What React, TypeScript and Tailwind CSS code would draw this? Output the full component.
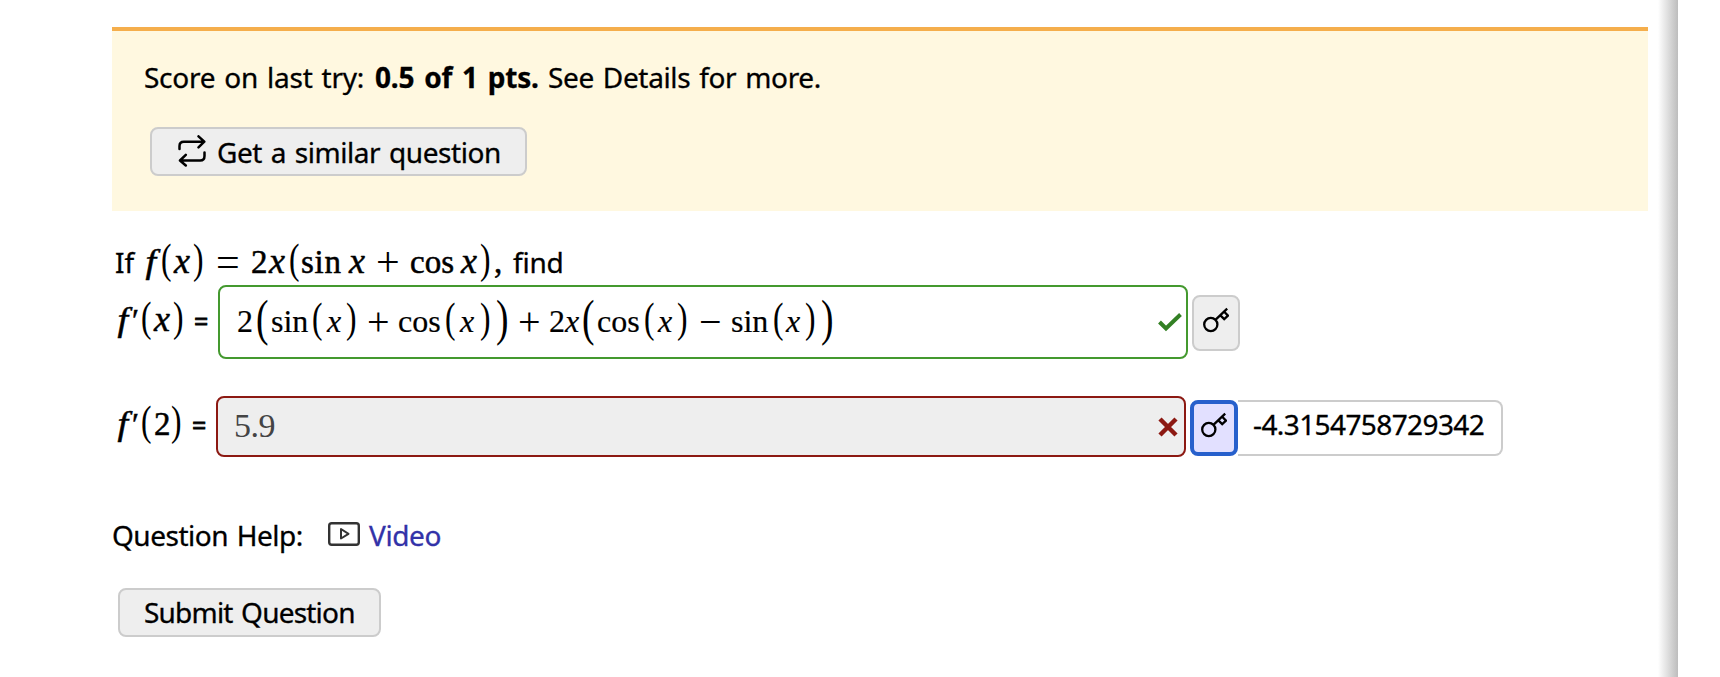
import type { ReactNode } from 'react'
import clsx from 'clsx'

/** One math symbol: fixed advance, so the spacing stays the same whatever the font. */
function G({ className, children }: { className?: string; children: ReactNode }) {
  return <span className={clsx('inline-block shrink-0 whitespace-nowrap', className)}>{children}</span>
}

function Paren({ className, big, children }: { className?: string; big?: boolean; children: ReactNode }) {
  return (
    <G className={className}>
      <span
        className={clsx(
          'inline-block origin-left scale-x-75 -ml-px [-webkit-text-stroke:0]',
          big ? 'relative top-[3px] text-[50px]' : 'text-[42px]',
        )}
      >
        {children}
      </span>
    </G>
  )
}

/** Binary operator or relation, lowered onto the math axis. */
function Op({ className, children }: { className?: string; children: ReactNode }) {
  return (
    <G className={className}>
      <span className="relative top-[3px] [-webkit-text-stroke:0]">{children}</span>
    </G>
  )
}

/** Slanted f, drawn wider than the serif italic one. */
function F({ className }: { className?: string }) {
  return (
    <G className={className}>
      <span className="inline-block origin-left scale-x-115 pl-1 text-[33px] italic">f</span>
    </G>
  )
}

function KeyIcon() {
  return (
    <svg viewBox="0 0 26 26" className="h-[26px] w-[26px]" fill="none" stroke="currentColor" strokeWidth="2.3">
      <circle cx="7.800" cy="17.500" r="6.600" />
      <path d="M12.400 12.900 24.200 1.600M17.400 8.400l3.800 3.700 3.800-3.500-3.800-3.900" />
    </svg>
  )
}

function RepeatIcon() {
  return (
    <svg
      viewBox="0 0 28 32"
      className="-mt-0.5 h-8 w-7"
      fill="none"
      stroke="currentColor"
      strokeWidth="2.5"
      strokeLinecap="round"
      strokeLinejoin="round"
    >
      <path d="M1.500 14v-3c0-3 1.500-4.300 4.300-4.300h20M20.500 1.300l5.800 5.400-5.800 5.600" />
      <path d="M26.500 17.500v3.500c0 3-1.500 4.500-4.300 4.500h-20M7.800 19.800 2 25.500l5.800 5" />
    </svg>
  )
}

function VideoIcon() {
  return (
    <svg viewBox="0 0 32 24" className="-mt-0.5 h-6 w-8" fill="none" stroke="#333" strokeWidth="2.4" strokeLinejoin="round">
      <rect x="1.200" y="1.200" width="29.600" height="21.600" rx="2.500" />
      <path d="M13 7v9.500l7.500-4.700z" strokeWidth="2" />
    </svg>
  )
}

const button = 'flex items-center rounded-lg border-2 border-[#ccc] bg-[#eee]'
const math = "flex items-baseline font-['Liberation_Serif',serif] leading-[50px]"
const heavy = '[-webkit-text-stroke:0.5px]'

export default function App() {
  return (
    <div className="flex h-[677px] w-[1720px] overflow-hidden bg-white font-['Noto_Sans',sans-serif] text-[28px] leading-[36px] text-black [-webkit-text-stroke:0.3px]">
      <main className="w-[1658px] pl-[112px] pt-[27px]">
        <section className="h-[184px] w-[1536px] border-t-4 border-[#f5ae4c] bg-[#fff8e0] pl-8 pt-7">
          <p className="flex whitespace-pre">
            <span className="w-[231px] tracking-[-0.25px] [word-spacing:2px]">Score on last try: </span>
            <b className="w-[173px] tracking-[-0.25px] [word-spacing:3px]">0.5 of 1 pts.</b>
            <span className="tracking-[-0.35px] [word-spacing:2px]">See Details for more.</span>
          </p>
          <button className={clsx(button, 'ml-1.5 mt-8 h-[49px] w-[377px] pl-[26px]')}>
            <RepeatIcon />
            <span className="ml-[11px] whitespace-nowrap tracking-[-0.45px] [word-spacing:2px]">
              Get a similar question
            </span>
          </button>
        </section>

        <div className={clsx(math, heavy, 'mt-[23px] h-[51px] pl-[3px] text-[32px]')}>
          <G className="w-[26px] font-['Noto_Sans'] text-[28px] [-webkit-text-stroke:0.3px]">If</G>
          <F className="w-[21px]" />
          <Paren className="w-[12px]">(</Paren>
          <G className="w-[20px] text-[36px] italic">x</G>
          <Paren className="w-[22px]">)</Paren>
          <Op className="w-[35px] text-[42px]">=</Op>
          <G className="w-[18px] text-[33px]">2</G>
          <G className="w-[21px] text-[36px] italic">x</G>
          <Paren className="w-[11px]">(</Paren>
          <G className="w-[48px] text-[33px] tracking-[0.7px]">sin</G>
          <G className="w-[27px] text-[36px] italic">x</G>
          <Op className="w-[34px] text-[42px]">+</Op>
          <G className="w-[51px] text-[33px]">cos</G>
          <G className="w-[20px] text-[36px] italic">x</G>
          <Paren className="w-[13px]">)</Paren>
          <G className="w-[19px] text-[33px]">,</G>
          <G className="font-['Noto_Sans'] text-[28px] tracking-[-0.2px] [-webkit-text-stroke:0.3px]">find</G>
        </div>

        <div className="flex h-[74px] items-start">
          <div className={clsx(math, heavy, 'w-[106px] pl-px pt-[7px]')}>
            <F className="w-[19px]" />
            <G className="w-[10px] text-[32px]">′</G>
            <Paren className="w-[12px]">(</Paren>
            <G className="w-[20px] text-[36px] italic">x</G>
            <Paren className="w-[20px]">)</Paren>
            <G className="font-['Noto_Sans'] text-[25px] [-webkit-text-stroke:0.8px]">=</G>
          </div>
          <div className="flex h-[74px] w-[970px] justify-between rounded-lg border-2 border-[#44992f] pl-[17px] pr-1">
            <div className={clsx(math, 'pt-[3px] text-[32px] [-webkit-text-stroke:0.2px]')}>
              <G className="w-[20px]">2</G>
              <Paren big className="w-[14px]">(</Paren>
              <G className="w-[42px]">sin</G>
              <Paren className="w-[14px]">(</Paren>
              <G className="w-[20px] italic">x</G>
              <Paren className="w-[20px]">)</Paren>
              <Op className="w-[31px] text-[40px]">+</Op>
              <G className="w-[48px]">cos</G>
              <Paren className="w-[14px]">(</Paren>
              <G className="w-[21px] italic">x</G>
              <Paren className="w-[16px]">)</Paren>
              <Paren big className="w-[21px]">)</Paren>
              <Op className="w-[31px] text-[40px]">+</Op>
              <G className="w-[16px]">2</G>
              <G className="w-[18px] italic">x</G>
              <Paren big className="w-[14px]">(</Paren>
              <G className="w-[48px]">cos</G>
              <Paren className="w-[13px]">(</Paren>
              <G className="w-[20px] italic">x</G>
              <Paren className="w-[21px]">)</Paren>
              <Op className="w-[32px] text-[40px]">−</Op>
              <G className="w-[43px]">sin</G>
              <Paren className="w-[12px]">(</Paren>
              <G className="w-[20px] italic">x</G>
              <Paren className="w-[16px]">)</Paren>
              <Paren big>)</Paren>
            </div>
            <svg viewBox="0 0 24 19" className="mt-[26px] h-[19px] w-6" fill="none" stroke="#338024" strokeWidth="4">
              <path d="M1.500 9l6.500 6.500L22.500 1.500" />
            </svg>
          </div>
          <button className={clsx(button, 'ml-1 mt-2.5 h-14 w-12 items-start pl-[9px] pt-2.5')}>
            <KeyIcon />
          </button>
        </div>

        <div className="mt-[37px] flex h-[61px] items-start">
          <div className={clsx(math, heavy, 'w-[104px] pl-px')}>
            <F className="w-[19px]" />
            <G className="w-[10px] text-[32px]">′</G>
            <Paren className="w-[12px]">(</Paren>
            <G className="w-[18px] text-[33px]">2</G>
            <Paren className="w-[20px]">)</Paren>
            <G className="font-['Noto_Sans'] text-[25px] [-webkit-text-stroke:0.8px]">=</G>
          </div>
          <div className="flex h-[61px] w-[970px] justify-between rounded-lg border-2 border-[#8c1912] bg-[#eee] pl-4 pr-1.5">
            <span className="font-['Liberation_Serif',serif] text-[34px] leading-[55px] tracking-[-0.5px] text-[#444] [-webkit-text-stroke:0]">
              5.9
            </span>
            <svg viewBox="0 0 20 20" className="mt-[19px] h-5 w-5" stroke="#8c1912" strokeWidth="4.500">
              <path d="M2 2l16 16M18 2 2 18" />
            </svg>
          </div>
          <button className="ml-1 mt-1 flex h-14 w-12 items-start rounded-lg border-4 border-[#2760cc] bg-[#e2e0ff] pl-[7px] pt-2">
            <KeyIcon />
          </button>
          <div className="mt-1 h-14 w-[265px] rounded-r-lg border-2 border-l-0 border-[#ccc] pl-[15px] leading-[45px] tracking-[-0.6px]">
            -4.3154758729342
          </div>
        </div>

        <div className="mt-[60px] flex h-9 items-center whitespace-nowrap">
          <span className="w-[216px] tracking-[-0.5px] [word-spacing:2px]">Question Help:</span>
          <VideoIcon />
          <a className="ml-[9px] tracking-[-0.4px] text-[#3232a8]">Video</a>
        </div>
        <button
          className={clsx(button, 'ml-1.5 mt-[35px] h-[49px] w-[263px] pb-0.5 pl-6 tracking-[-0.8px] [word-spacing:2px]')}
        >
          Submit Question
        </button>
      </main>
      <div className="w-5 bg-linear-to-r from-white to-[#bdbdbd]" />
    </div>
  )
}
